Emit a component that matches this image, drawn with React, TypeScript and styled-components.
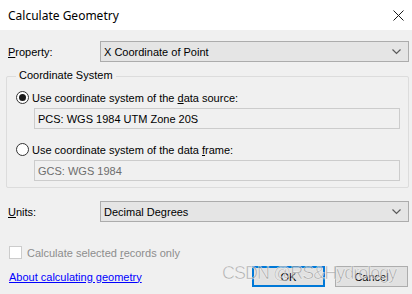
import React from 'react';
import {styled, createGlobalStyle} from "styled-components";

const GlobalStyle = createGlobalStyle`
  html, body {
    margin: 0;
    padding: 0;
    background: #f0f0f0;
  }
  * {
    box-sizing: border-box;
  }
`

const ChevronDown = () => (
    <svg width="9" height="6" viewBox="0 0 9 6">
        <path d="M0.5 0.5 L4.5 4.5 L8.5 0.5" fill="none" stroke="#5a5a5a" strokeWidth="1.2"/>
    </svg>
)

const CloseIcon = () => (
    <svg width="11" height="11" viewBox="0 0 11 11">
        <path d="M0.5 0.5 L10.5 10.5 M10.5 0.5 L0.5 10.5" stroke="#1a1a1a" strokeWidth="1"/>
    </svg>
)

type ComboProps = {
    label: string
    accessKey: string
    value: string
    top: number
}

const ComboRow = (props: ComboProps) => {
    const rest = props.label.slice(1)
    return (
        <Row $top={props.top}>
            <Label><u>{props.accessKey}</u>{rest}</Label>
            <Combo>
                <span>{props.value}</span>
                <ChevronDown/>
            </Combo>
        </Row>
    )
}

type RadioProps = {
    checked: boolean
    before: string
    key2: string
    after: string
    value: string
}

const RadioOption = (props: RadioProps) => (
    <RadioBlock>
        <RadioLine>
            <RadioCircle checked={props.checked}/>
            <span>{props.before}<u>{props.key2}</u>{props.after}</span>
        </RadioLine>
        <ReadOnlyBox $disabled={!props.checked}>{props.value}</ReadOnlyBox>
    </RadioBlock>
)

export default function App() {
    return (
        <Dialog>
            <GlobalStyle/>
            <TitleBar>
                <Title>Calculate Geometry</Title>
                <CloseButton><CloseIcon/></CloseButton>
            </TitleBar>
            <Body>
                <ComboRow label="Property:" accessKey="P" value="X Coordinate of Point" top={0}/>
                <GroupBox>
                    <Legend>Coordinate System</Legend>
                    <RadioOption checked={true}
                                 before="Use coordinate system of the "
                                 key2="d"
                                 after="ata source:"
                                 value="PCS: WGS 1984 UTM Zone 20S"/>
                    <RadioOption checked={false}
                                 before="Use coordinate system of the data "
                                 key2="f"
                                 after="rame:"
                                 value="GCS: WGS 1984"/>
                </GroupBox>
                <ComboRow label="Units:" accessKey="U" value="Decimal Degrees" top={13}/>
                <CheckRow>
                    <CheckBox/>
                    <span>Calculate selected <u>r</u>ecords only</span>
                </CheckRow>
                <Footer>
                    <Link>About calculating geometry</Link>
                    <Buttons>
                        <Button $default={true}>OK</Button>
                        <Button $default={false}>Cancel</Button>
                    </Buttons>
                </Footer>
            </Body>
            <Watermark>CSDN @RS&amp;Hydrology</Watermark>
        </Dialog>
    )
}

const Dialog = styled.div`
  position: relative;
  width: 412px;
  height: 294px;
  background: #f0f0f0;
  font-family: 'Liberation Sans', Arial, sans-serif;
  font-size: 11px;
  color: #000;
  overflow: hidden;
`

const TitleBar = styled.div`
  height: 30px;
  background: #ffffff;
  display: flex;
  align-items: center;
  justify-content: space-between;
  padding: 0 7px 0 8px;
`

const Title = styled.div`
  font-family: 'Noto Sans', sans-serif;
  font-size: 12px;
  color: #000;
`

const CloseButton = styled.div`
  width: 14px;
  display: flex;
  align-items: center;
  justify-content: center;
  margin-top: 1px;
`

const Body = styled.div`
  padding: 11px 3px 0 6px;
  display: flex;
  flex-direction: column;
`

const Row = styled.div<{$top: number}>`
  display: flex;
  align-items: center;
  height: 21px;
  margin-top: ${props => props.$top}px;
`

const Label = styled.div`
  width: 94px;
  padding-left: 2px;
`

const Combo = styled.div`
  flex: 1;
  height: 21px;
  background: #e5e5e5;
  border: 1px solid #acacac;
  display: flex;
  align-items: center;
  justify-content: space-between;
  padding: 0 7px 0 3px;
`

const GroupBox = styled.div`
  position: relative;
  margin-top: 14px;
  height: 112px;
  border: 1px solid #dcdcdc;
  border-radius: 2px;
  padding: 13px 8px 0 9px;
  display: flex;
  flex-direction: column;
  gap: 13px;
`

const Legend = styled.div`
  position: absolute;
  top: -8px;
  left: 9px;
  padding: 0 3px;
  background: #f0f0f0;
`

const RadioBlock = styled.div`
  display: flex;
  flex-direction: column;
  gap: 3px;
`

const RadioLine = styled.div`
  display: flex;
  align-items: center;
  gap: 3px;
  height: 15px;
`

const RadioCircle = styled.div<{checked: boolean}>`
  width: 13px;
  height: 13px;
  border-radius: 50%;
  border: 1px solid #333333;
  background: #ffffff;
  display: flex;
  align-items: center;
  justify-content: center;

  &::after {
    content: '';
    width: 7px;
    height: 7px;
    border-radius: 50%;
    background: ${props => props.checked ? '#1a1a1a' : 'transparent'};
  }
`

const ReadOnlyBox = styled.div<{$disabled: boolean}>`
  margin-left: 18px;
  height: 21px;
  background: #f0f0f0;
  border: 1px solid #cccccc;
  display: flex;
  align-items: center;
  padding-left: 3px;
  color: ${props => props.$disabled ? '#6d6d6d' : '#000'};
`

const CheckRow = styled.div`
  display: flex;
  align-items: center;
  gap: 5px;
  margin-top: 24px;
  padding-left: 3px;
  height: 13px;
  color: #8d8d8d;
`

const CheckBox = styled.div`
  width: 13px;
  height: 13px;
  border: 1px solid #cccccc;
  background: #ffffff;
`

const Footer = styled.div`
  display: flex;
  align-items: center;
  justify-content: space-between;
  margin-top: 7px;
`

const Link = styled.a`
  color: #0000ff;
  text-decoration: underline;
  padding-left: 3px;
  cursor: pointer;
`

const Buttons = styled.div`
  display: flex;
  gap: 10px;
  padding-right: 1px;
`

const Button = styled.button<{$default: boolean}>`
  width: 73px;
  height: 21px;
  background: #e1e1e1;
  border: ${props => props.$default ? '2px solid #0078d7' : '1px solid #adadad'};
  font-family: 'Liberation Sans', Arial, sans-serif;
  font-size: 11px;
  color: #000;
  padding: 0;
`

const Watermark = styled.div`
  position: absolute;
  left: 222px;
  top: 263px;
  font-family: 'Liberation Sans', Arial, sans-serif;
  font-size: 18px;
  letter-spacing: -1px;
  color: rgba(120, 120, 120, 0.55);
  -webkit-text-stroke: 0.6px rgba(255, 255, 255, 0.7);
  pointer-events: none;
  white-space: nowrap;
`
